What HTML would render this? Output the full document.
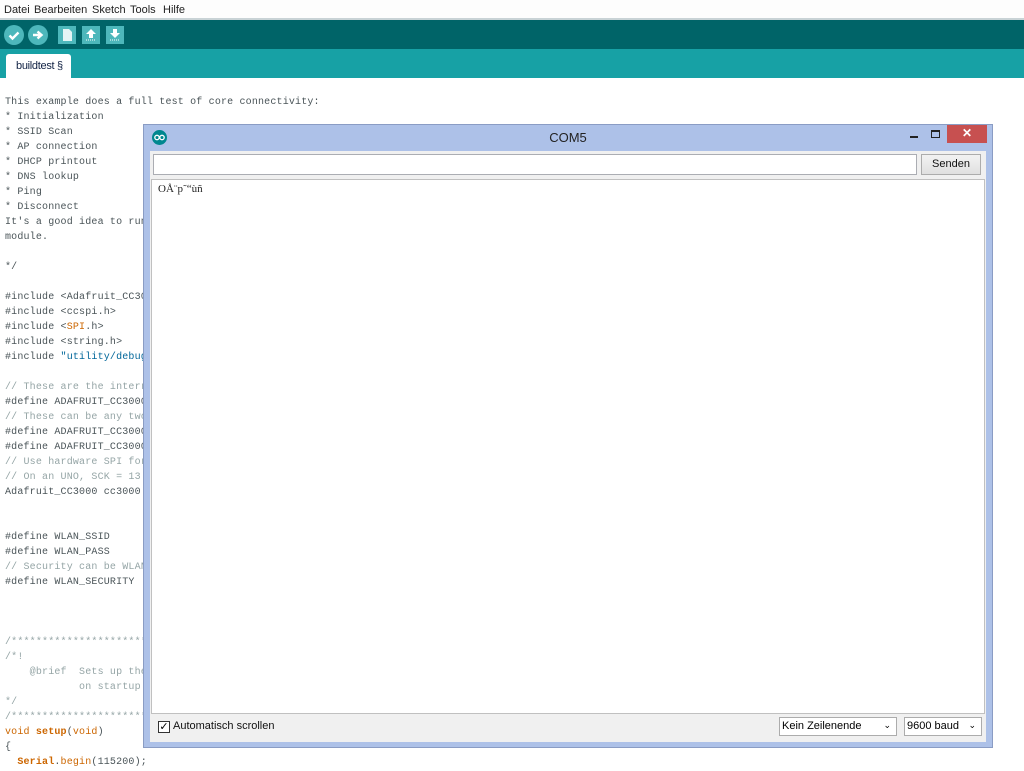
<!DOCTYPE html>
<html><head><meta charset="utf-8"><style>
*{margin:0;padding:0;box-sizing:border-box}
body{width:1024px;height:771px;overflow:hidden;background:#fff;font-family:"Liberation Sans",sans-serif;position:relative}
.menu{position:absolute;left:0;top:0;width:1024px;height:20px;background:#fdfdfd;border-bottom:2px solid #c9d3d6;font-size:11px;color:#222}
.menu span{position:absolute;top:4px}
.tb{position:absolute;left:0;top:20px;width:1024px;height:29px;background:#006468}
.rb{position:absolute;top:5px;width:20px;height:20px;border-radius:50%;background:#4db7bb}
.sb{position:absolute;top:6px;width:18px;height:18px;background:#4db7bb}
.tabs{position:absolute;left:0;top:49px;width:1024px;height:29px;background:#17a1a5}
.tab{position:absolute;left:6px;top:5px;width:65px;height:24px;background:#fff;border-radius:3px 3px 0 0;font-size:11px;color:#124;padding:6px 0 0 10px;letter-spacing:-0.3px}
.code{position:absolute;left:5px;top:95px;font-family:"Liberation Mono",monospace;font-size:10px;letter-spacing:0.17px;line-height:15px;color:#4a5458;white-space:pre}
.o{color:#cc6600}.b{color:#006699}.c{color:#95a5a6}.bo{color:#cc6600;font-weight:bold}
.win{position:absolute;left:143px;top:124px;width:850px;height:624px;background:#adc1e8;border:1px solid #8a9cc4}
.title{position:absolute;left:0;top:0;width:100%;height:26px;text-align:center;font-size:13px;color:#222;padding-top:5px}
.inner{position:absolute;left:6px;top:26px;width:836px;height:591px;background:#f0f0f0}
</style></head><body>
<div class="menu"><span style="left:4px">Datei</span><span style="left:34px">Bearbeiten</span><span style="left:92px">Sketch</span><span style="left:130px">Tools</span><span style="left:163px">Hilfe</span></div>
<div class="tb">
<div class="rb" style="left:4px"><svg width="20" height="20"><path d="M5.5 10.5l3 3 6-6" stroke="#fff" stroke-width="2.4" fill="none"/></svg></div>
<div class="rb" style="left:28px"><svg width="20" height="20"><path d="M5 10h7M9.5 6.5l4 3.5-4 3.5" stroke="#fff" stroke-width="2.4" fill="none"/></svg></div>
<div class="sb" style="left:58px"><svg width="18" height="18"><path d="M5 3h6l3 3v9H5z" fill="#fff" opacity=".85"/></svg></div>
<div class="sb" style="left:82px"><svg width="18" height="18"><path d="M9 3l5 5h-3v4H7V8H4z" fill="#fff"/><path d="M4 14h10" stroke="#fff" stroke-dasharray="1 1"/></svg></div>
<div class="sb" style="left:106px"><svg width="18" height="18"><path d="M9 12l5-5h-3V3H7v4H4z" fill="#fff"/><path d="M4 14h10" stroke="#fff" stroke-dasharray="1 1"/></svg></div>
</div>
<div class="tabs"><div class="tab">buildtest §</div></div>
<div class="code">This example does a full test of core connectivity:
* Initialization
* SSID Scan
* AP connection
* DHCP printout
* DNS lookup
* Ping
* Disconnect
It's a good idea to run the sketch
module.

*/

#include &lt;Adafruit_CC3000.h&gt;
#include &lt;ccspi.h&gt;
#include &lt;<span class="o">SPI</span>.h&gt;
#include &lt;string.h&gt;
#include <span class="b">"utility/debug.h"</span>

<span class="c">// These are the interrupt</span>
#define ADAFRUIT_CC3000_IRQ
<span class="c">// These can be any two</span>
#define ADAFRUIT_CC3000_VBAT
#define ADAFRUIT_CC3000_CS
<span class="c">// Use hardware SPI for</span>
<span class="c">// On an UNO, SCK = 13</span>
Adafruit_CC3000 cc3000


#define WLAN_SSID
#define WLAN_PASS
<span class="c">// Security can be WLAN</span>
#define WLAN_SECURITY



<span class="c">/*************************</span>
<span class="c">/*!</span>
<span class="c">    @brief  Sets up the</span>
<span class="c">            on startup</span>
<span class="c">*/</span>
<span class="c">/*************************</span>
<span class="o">void</span> <span class="bo">setup</span>(<span class="o">void</span>)
{
  <span class="bo">Serial</span>.<span class="o">begin</span>(115200);</div>
<div class="win">
<div class="title">COM5</div>
<div style="position:absolute;left:8px;top:5px;width:15px;height:15px;border-radius:50%;background:#00878f"><svg width="15" height="15"><circle cx="5" cy="7.5" r="2.2" stroke="#fff" fill="none" stroke-width="1.3"/><circle cx="10" cy="7.5" r="2.2" stroke="#fff" fill="none" stroke-width="1.3"/></svg></div>
<div style="position:absolute;left:766px;top:11px;width:8px;height:2px;background:#222"></div>
<div style="position:absolute;left:787px;top:5px;width:9px;height:8px;border:1px solid #222;border-top-width:2px"></div>
<div style="position:absolute;left:803px;top:0;width:40px;height:18px;background:#c75050;color:#fff;text-align:center;font-size:12px;font-weight:bold;line-height:17px">✕</div>
<div class="inner">
<div style="position:absolute;left:3px;top:3px;width:764px;height:21px;background:#fff;border:1px solid #abadb3"></div>
<div style="position:absolute;left:771px;top:3px;width:60px;height:21px;background:linear-gradient(#f2f2f2,#e0e0e0);border:1px solid #acacac;font-size:11px;text-align:center;line-height:19px;color:#111">Senden</div>
<div style="position:absolute;left:1px;top:28px;width:834px;height:535px;background:#fff;border:1px solid #c0c0c0"></div>
<div style="position:absolute;left:8px;top:32px;font-family:'Liberation Serif',serif;font-size:11px;color:#222">OÅ¨p˜“ùñ</div>
<div style="position:absolute;left:8px;top:570px;width:12px;height:12px;border:1px solid #333;background:#fff;font-size:11px;line-height:10px;text-align:center">✓</div>
<div style="position:absolute;left:23px;top:569px;font-size:11px;color:#111">Automatisch scrollen</div>
<div style="position:absolute;left:629px;top:566px;width:118px;height:19px;background:#fff;border:1px solid #acacac;font-size:11px;padding:2px 0 0 2px">Kein Zeilenende<span style="position:absolute;right:5px;top:2px;font-size:9px">⌄</span></div>
<div style="position:absolute;left:754px;top:566px;width:78px;height:19px;background:#fff;border:1px solid #acacac;font-size:11px;padding:2px 0 0 2px">9600 baud<span style="position:absolute;right:5px;top:2px;font-size:9px">⌄</span></div>
</div>
</div>
</body></html>
